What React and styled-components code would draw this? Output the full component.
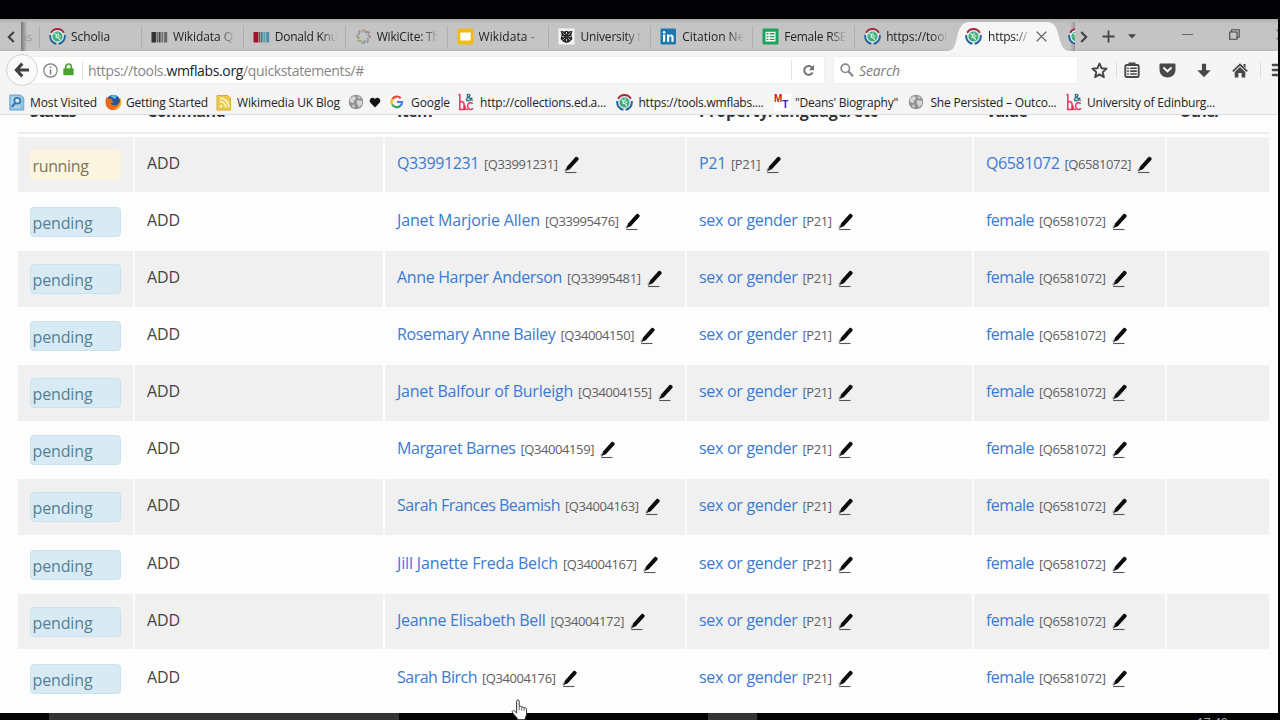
import React, { useLayoutEffect, useRef, useState } from 'react';
import styled, { createGlobalStyle, css } from 'styled-components';

const GlobalStyle = createGlobalStyle`
  * { box-sizing: border-box; }
  body {
    margin: 0;
    background: #000;
    overflow: hidden;
    font-family: "Open Sans", "Noto Sans", sans-serif;
  }
  svg { display: block; flex: none; }
`;

// spreads the letters of a label over a fixed width
const Fit = ({ w, children }) => {
  const ref = useRef(null);
  const [spacing, setSpacing] = useState(0);

  useLayoutEffect(() => {
    const count = ref.current.textContent.length;
    setSpacing((w - ref.current.getBoundingClientRect().width) / count);
  }, [w]);

  return (
    <FitBox $w={w}>
      <span ref={ref} style={{ letterSpacing: `${spacing}px` }}>{children}</span>
    </FitBox>
  );
};

/* ---------- icons ---------- */

const ToolsIcon = () => (
  <svg width="17" height="17" viewBox="0 0 17 17" fill="none">
    <circle cx="8.5" cy="8.5" r="7" fill="#dfe7ea" />
    <circle cx="8.5" cy="8.5" r="5" fill="#3fae7c" />
    <path d="M5.4 5.6l2 1.2-.3 2.2 2.6 1 1 2" stroke="#e6f5ec" strokeWidth="1.2" />
    <path d="M9 4.6v3.4h2.6" stroke="#e3f4ea" strokeWidth="1" />
    <path d="M2.1 4.8A7.3 7.3 0 0 1 14.900 4.800" stroke="#a5283c" strokeWidth="1.900" />
    <path d="M1.300 7A7.300 7.300 0 0 0 7.400 15.700" stroke="#22659c" strokeWidth="1.900" />
    <path d="M15.700 7A7.300 7.300 0 0 1 9.600 15.700" stroke="#22659c" strokeWidth="1.900" />
  </svg>
);

const BarsIcon = ({ colored }) => (
  <svg width="17" height="16" viewBox="0 0 17 16">
    <rect x="0.5" y="3" width="4.5" height="10.5" fill={colored ? '#a5102f' : '#333'} />
    <rect x="5.6" y="3" width="1.2" height="10.5" fill={colored ? '#a5102f' : '#555'} />
    <rect x="7.6" y="3" width="2" height="10.5" fill={colored ? '#3e7f90' : '#444'} />
    <rect x="10.4" y="3" width="2" height="10.5" fill={colored ? '#5d9dac' : '#777'} />
    <rect x="13.2" y="3" width="3" height="10.5" fill={colored ? '#4b90a2' : '#666'} />
  </svg>
);

const WheelIcon = () => (
  <svg width="17" height="17" viewBox="0 0 17 17" fill="none" strokeWidth="1.6">
    {[0, 45, 90, 135, 180, 225, 270, 315].map((a, i) => (
      <path
        key={a}
        d="M6.4 4.6 Q7.6 1.9 10.4 1.7"
        stroke={['#a99a7c', '#8c8c8c', '#a98484', '#999', '#7f9a9a', '#b0a070', '#8f9d74', '#999'][i]}
        transform={`rotate(${a} 8.5 8.5)`}
      />
    ))}
  </svg>
);

const SlidesIcon = () => (
  <svg width="17" height="17" viewBox="0 0 17 17">
    <rect x="0.5" y="0.5" width="16" height="16" rx="1.5" fill="#f0bb12" />
    <rect x="3.3" y="4.5" width="10.4" height="8" fill="#fff" />
  </svg>
);

const CrestIcon = () => (
  <svg width="17" height="17" viewBox="0 0 17 17">
    <rect x="0.5" y="0.5" width="16" height="16" fill="#f4f4f4" />
    <path d="M2.6 2.8l3.4.8 2.5-.8 2.5.8 3.4-.8-1 4.2 1 4-2.400 2.800-3.500 1.100L5 13.800l-2.400-2.800 1-4z" fill="#252525" />
    <path d="M4.500 4.500l8 8M12.500 4.500l-8 8" stroke="#b8b8b8" strokeWidth="0.900" />
    <path d="M4 8.600h2M11 8.600h2M8.500 4v2M8.500 11v2.400" stroke="#eee" strokeWidth="0.800" />
    <circle cx="8.500" cy="8.500" r="2" fill="#333" />
  </svg>
);

const LinkedInIcon = () => (
  <svg width="17" height="17" viewBox="0 0 17 17">
    <rect x="0.500" y="0.500" width="15.500" height="16" rx="1" fill="#1879b3" />
    <rect x="3" y="6.500" width="2.200" height="7.200" fill="#fff" />
    <circle cx="4.100" cy="4.200" r="1.300" fill="#fff" />
    <path d="M7 13.700V6.500h2.100v1C10.300 5.700 13.600 6 13.600 9.200v4.500h-2.200V9.700c0-2-2.200-1.800-2.200 0v4z" fill="#fff" />
  </svg>
);

const SheetsIcon = () => (
  <svg width="17" height="17" viewBox="0 0 17 17">
    <rect x="0.500" y="0.500" width="16" height="16" rx="1" fill="#1da45c" />
    <rect x="3.500" y="3.800" width="10" height="9.700" fill="#fff" />
    <path d="M4.500 5.800h2M7.700 5.800h4.800M4.500 8.600h2M7.700 8.600h4.800M4.500 11.400h2M7.700 11.400h4.800" stroke="#1da45c" strokeWidth="1.400" />
  </svg>
);

const VisitedIcon = () => (
  <svg width="16" height="17" viewBox="0 0 16 17">
    <path d="M.8 1h11l3 3v12H.8z" fill="#8fc1e0" stroke="#6ea5cb" />
    <path d="M2 2.500h9v12H2z" fill="#a9d2ec" />
    <circle cx="8.300" cy="6.800" r="2.900" fill="#d5ebf8" stroke="#3776aa" strokeWidth="1.700" />
    <path d="M6.200 9l-3.400 4" stroke="#3776aa" strokeWidth="2.200" />
  </svg>
);

const FirefoxIcon = () => (
  <svg width="17" height="17" viewBox="0 0 17 17">
    <circle cx="8.300" cy="8" r="7.200" fill="#24559b" />
    <path d="M5 2a7 7 0 0 1 7-.2c-1 1.200-1 2.700-2 3.500z" fill="#5cb4e4" />
    <path d="M1.600 2.800C.3 5.300 0 9.500 1.500 12.500c2.500 4.500 10 5 13.200.5 1.800-2.800 2-6.500.3-9.200.3 3-.8 6.400-4 7.400-3 .6-5-.6-5.400-2.400 1.400.5 2.800 0 3.300-1L6.700 6.600l.6-1.700C5 5 3.200 4.500 1.600 2.800z" fill="#e66a1e" />
    <path d="M12.600 12.800c2.400-1.900 3-5 2.400-9 2 3.200 1.800 7.400-.7 9.800-2 1.800-4.600 2.300-6.600 1.700 2 0 3.500-.9 4.900-2.500z" fill="#f6b52c" />
  </svg>
);

const FeedIcon = () => (
  <svg width="16" height="17" viewBox="0 0 16 17" fill="none">
    <path d="M1 1.500h11l2.500 2.800V16H1z" fill="#ebc94f" stroke="#d3ad38" />
    <path d="M4 7.500a5.800 5.800 0 0 1 5.800 5.800M4 4.300a9 9 0 0 1 9 9" stroke="#fff6d2" strokeWidth="1.600" />
    <circle cx="5" cy="12.200" r="1.300" fill="#fff6d2" />
  </svg>
);

const GlobeIcon = () => (
  <svg width="16" height="16" viewBox="0 0 16 16">
    <circle cx="8" cy="8" r="7.300" fill="#929292" />
    <path d="M2 5l3-2.800 3 .8-.5 2.500L5.500 7 6 8.700 4 9 1.800 7.500zM8.500 7.500L11 6.200l3.500 1-.6 3.300-2.700 2.900-1.700-2.700z" fill="#d6d6d6" />
    <path d="M10 1.700l3 2-1.800 1.200-1.500-1zM4.500 10.500l2.500.8-.6 2.600-2.300-1z" fill="#c7c7c7" />
  </svg>
);

const HeartIcon = () => (
  <svg width="12" height="11" viewBox="0 0 12 11">
    <path d="M6 10.500L1.200 5.600C-.9 2.600 3.300-1.300 6 2c2.700-3.300 6.900.6 4.800 3.600z" fill="#111" />
  </svg>
);

const GoogleIcon = () => (
  <svg width="14" height="14" viewBox="0 0 14 14" fill="none" strokeWidth="2.200">
    <path d="M2.300 4.200A5.200 5.200 0 0 1 10.700 3.200" stroke="#e5453a" />
    <path d="M2.300 4.200a5.200 5.200 0 0 0 0 5.300" stroke="#f3b911" />
    <path d="M2.300 9.500a5.200 5.200 0 0 0 8 1.400" stroke="#35a455" />
    <path d="M10.300 10.900C11.500 9.900 12.100 8.500 12.100 7H7" stroke="#4480ea" />
  </svg>
);

const LibraryIcon = () => (
  <svg width="16" height="18" viewBox="0 0 16 18" fill="none">
    <path d="M1.800 1v15.300M.4 1.500h1.400M1.800 9.400c1.500-1.500 4.200-.9 4.200 1.600v5M6 11c0 6 3.500 5.800 3.500 5.300M.8 16.500H7" stroke="#e03a63" strokeWidth="1.500" />
    <path d="M14.600 10.800c-1.200-1.900-5-1.400-5 2.200s3.700 4.400 5.300 2.200" stroke="#e03a63" strokeWidth="1.500" />
    <path d="M14.800 7.600L9.300 3.200C8.500 1.300 12 .6 12 2.500c0 1.700-3.600 2-3.600 4 0 2.200 4.600 1.800 5.700-2" stroke="#2f7187" strokeWidth="1.400" />
  </svg>
);

const BackIcon = () => (
  <svg width="16" height="16" viewBox="0 0 16 16" fill="none" stroke="#424242" strokeWidth="3.100">
    <path d="M8.300 1.600L2.400 8l5.900 6.400M3 8h12" />
  </svg>
);

const InfoIcon = () => (
  <svg width="15" height="15" viewBox="0 0 15 15" fill="none" stroke="#7c7c7c">
    <circle cx="7.500" cy="7.500" r="6.700" strokeWidth="1.200" />
    <path d="M7.500 6.500v5M7.500 3.500v1.600" strokeWidth="1.500" />
  </svg>
);

const LockIcon = () => (
  <svg width="11" height="13" viewBox="0 0 11 13">
    <path d="M2.700 6V3.800a2.800 2.800 0 0 1 5.600 0V6" fill="none" stroke="#4aa52e" strokeWidth="1.700" />
    <rect x="0.300" y="5.300" width="10.400" height="7" rx="0.800" fill="#4aa52e" />
  </svg>
);

const ReloadIcon = () => (
  <svg width="13" height="13" viewBox="0 0 13 13">
    <path d="M10.300 3.700A4.500 4.500 0 1 0 10.600 8.600" fill="none" stroke="#737373" strokeWidth="2" />
    <path d="M12 .8v5.400H6.700z" fill="#737373" />
  </svg>
);

const SearchIcon = () => (
  <svg width="14" height="14" viewBox="0 0 14 14" fill="none" stroke="#8a8a8a">
    <circle cx="5.300" cy="5.300" r="4.200" strokeWidth="1.700" />
    <path d="M8.300 8.300l4.700 4.900" strokeWidth="2.300" />
  </svg>
);

const StarIcon = () => (
  <svg width="17" height="17" viewBox="0 0 17 17" fill="none" stroke="#444" strokeWidth="1.900" strokeLinejoin="round">
    <path d="M8.500 1.500l2 4.700 5 .5-3.800 3.400 1.200 5-4.400-2.700-4.400 2.700 1.200-5L1.500 6.700l5-.5z" />
  </svg>
);

const ClipboardIcon = () => (
  <svg width="16" height="16" viewBox="0 0 16 16" fill="none" stroke="#484848" strokeWidth="1.900">
    <rect x="1.300" y="3" width="13.400" height="12" rx="1.300" />
    <path d="M5.300 3V1.300h5.400V3M3.200 6.300h1.600M6.200 6.300h6.600M3.200 9.100h1.600M6.200 9.100h6.600M3.200 12h1.600M6.200 12h6.600" strokeWidth="1.600" />
  </svg>
);

const PocketIcon = () => (
  <svg width="17" height="15" viewBox="0 0 17 15">
    <path d="M1.800.5h13.400c.8 0 1.300.5 1.300 1.300v4.700c0 10.600-16 10.600-16 0V1.800C.500 1 1 .5 1.800.5z" fill="#484848" />
    <path d="M5 5l3.500 3.300L12 5" fill="none" stroke="#f5f5f5" strokeWidth="2" strokeLinecap="round" />
  </svg>
);

const DownloadIcon = () => (
  <svg width="14" height="15" viewBox="0 0 14 15">
    <path d="M4.900.8h4.200v6.500h4.600L7 14.200.300 7.300h4.600z" fill="#484848" />
  </svg>
);

const HomeIcon = () => (
  <svg width="16" height="15" viewBox="0 0 16 15">
    <path d="M.8 8.300L8 1.500l7.200 6.800" fill="none" stroke="#484848" strokeWidth="1.800" />
    <path d="M11.500 1h2v4l-2-2zM2.700 9L8 4.100 13.300 9v5.600H9.600V10H6.400v4.600H2.700z" fill="#484848" />
  </svg>
);

const MenuIcon = () => (
  <svg width="16" height="14" viewBox="0 0 16 14" stroke="#484848" strokeWidth="2.600" strokeLinecap="round">
    <path d="M2 2h12M2 7h12M2 12h12" />
  </svg>
);

const Chevron = ({ left }) => (
  <svg width="8" height="12" viewBox="0 0 8 12" fill="none" stroke="#404040" strokeWidth="2.100">
    <path d={left ? 'M6.800 1L1.800 6l5 5' : 'M1.200 1l5 5-5 5'} />
  </svg>
);

const PlusIcon = () => (
  <svg width="13" height="13" viewBox="0 0 13 13" stroke="#444" strokeWidth="1.800">
    <path d="M6.500 .5v12M.5 6.500h12" />
  </svg>
);

const CaretIcon = () => (
  <svg width="8" height="5" viewBox="0 0 8 5"><path d="M0 .3h8L4 4.600z" fill="#444" /></svg>
);

const CloseIcon = () => (
  <svg width="11" height="11" viewBox="0 0 11 11" stroke="#555" strokeWidth="1.200">
    <path d="M.7 .7l9.600 9.600M10.300 .7L.7 10.300" />
  </svg>
);

const MinimizeIcon = () => (
  <svg width="11" height="3" viewBox="0 0 11 3"><path d="M0 1.500h11" stroke="#666" /></svg>
);

const RestoreIcon = () => (
  <svg width="11" height="11" viewBox="0 0 11 11" fill="none" stroke="#444" strokeWidth="1.100">
    <path d="M.7 3h7.300v7.300H.7zM2.700 3V.8h7.500v7.400H8" />
  </svg>
);

const PencilIcon = () => (
  <svg width="16" height="18" viewBox="0 0 16 18">
    <path d="M1.200 16.500h11.300" stroke="#555" strokeWidth="1.100" />
    <path d="M11.300 1.200c1-.7 1.700-.4 2.600.4s1.100 1.400.4 2.400l-8.500 9.300-3.100 1.200-1.200 1-.3-.3.900-1.400.9-3.200z" fill="#0a0a0a" />
    <path d="M1.200 15.300v-1.800l1.600-2" fill="none" stroke="#777" strokeWidth="0.900" />
  </svg>
);

const HandCursor = () => (
  <svg width="19" height="22" viewBox="0 0 19 22">
    <path
      d="M6.600 2.200c0-1.700 2.600-1.700 2.600 0v5.200c1-.6 2.100-.1 2.400.7.900-.5 2-.1 2.300.8 1.200-.6 2.600 0 2.600 1.600v4.200c0 2.700-1.300 3.400-1.500 6H7.800c-.4-2.200-3.200-4-5.300-7.200-.9-1.500.9-2.500 2-1.500l2.100 2z"
      fill="#fff"
      stroke="#333"
      strokeWidth="1"
    />
    <path d="M9.200 7.400v4M11.700 8.200v3.300M14.100 9v2.800" stroke="#555" strokeWidth="0.900" />
  </svg>
);

/* ---------- data ---------- */

const tabs = [
  { label: 'Scholia', w: 39, icon: <ToolsIcon /> },
  { label: 'Wikidata Q', w: 60, icon: <BarsIcon /> },
  { label: 'Donald Knu', w: 63, icon: <BarsIcon colored /> },
  { label: 'WikiCite: Th', w: 63, icon: <WheelIcon /> },
  { label: 'Wikidata -', w: 56, icon: <SlidesIcon /> },
  { label: 'University t', w: 61, icon: <CrestIcon /> },
  { label: 'Citation Ne', w: 62, icon: <LinkedInIcon /> },
  { label: 'Female RSE', w: 62, icon: <SheetsIcon /> },
  { label: 'https://tool', w: 61, icon: <ToolsIcon /> },
];

const bookmarks = [
  { label: 'Most Visited', w: 67, size: 96, icon: <VisitedIcon /> },
  { label: 'Getting Started', w: 82, size: 111, icon: <FirefoxIcon /> },
  { label: 'Wikimedia UK Blog', w: 103, size: 132, icon: <FeedIcon /> },
  { heart: true, size: 42, icon: <GlobeIcon /> },
  { label: 'Google', w: 39, size: 67.500, icon: <GoogleIcon /> },
  { label: 'http://collections.ed.a...', w: 126, size: 158.500, wide: true, icon: <LibraryIcon /> },
  { label: 'https://tools.wmflabs....', w: 125, size: 158, wide: true, icon: <ToolsIcon /> },
  { label: '"Deans\' Biography"', w: 103, size: 134, mt: true },
  { label: 'She Persisted – Outco...', w: 126, size: 158, wide: true, icon: <GlobeIcon /> },
  { label: 'University of Edinburg...', w: 128, size: 160, icon: <LibraryIcon /> },
];

const headers = [
  ['Status', 46],
  ['Command', 78],
  ['Item', 35],
  ['Property/language/etc', 179],
  ['Value', 41],
  ['Other', 41],
];

const rows = [
  ['Q33991231', 82, 'Q33991231'],
  ['Janet Marjorie Allen', 143, 'Q33995476'],
  ['Anne Harper Anderson', 165, 'Q33995481'],
  ['Rosemary Anne Bailey', 158.5, 'Q34004150'],
  ['Janet Balfour of Burleigh', 176, 'Q34004155'],
  ['Margaret Barnes', 118.5, 'Q34004159'],
  ['Sarah Frances Beamish', 163, 'Q34004163'],
  ['Jill Janette Freda Belch', 161, 'Q34004167'],
  ['Jeanne Elisabeth Bell', 148.5, 'Q34004172'],
  ['Sarah Birch', 80, 'Q34004176'],
];

const Entity = ({ name, w, id, idWidth }) => (
  <EntityLine>
    <Link><Fit w={w}>{name}</Fit></Link>
    <EntityId><Fit w={idWidth}>{`[${id}]`}</Fit></EntityId>
    <PencilIcon />
  </EntityLine>
);

const App = () => (
  <Screen>
    <GlobalStyle />
    <Window>
      <TabBar>
        <ScrollLeft><Chevron left /></ScrollLeft>
        <TabRemnant>is</TabRemnant>
        {tabs.map((tab) => (
          <Tab key={tab.label}>
            {tab.icon}
            <TabLabel><Fit w={tab.w}>{tab.label}</Fit></TabLabel>
          </Tab>
        ))}
        <ActiveTab>
          <TabShape width="126" height="30" viewBox="0 0 126 30">
            <path d="M0 30C8 30 9 25 11 16S16 1 24 1H101c8 0 10 7 12 15s4 14 12 14z" fill="#f6f6f6" />
          </TabShape>
          <ActiveContent>
            <ToolsIcon />
            <ActiveLabel><Fit w={39}>https://</Fit></ActiveLabel>
            <CloseIcon />
          </ActiveContent>
        </ActiveTab>
        <CutTab><ToolsIcon /></CutTab>
        <TabTools>
          <Chevron />
          <PlusIcon />
          <CaretIcon />
        </TabTools>
        <WindowButtons>
          <MinimizeIcon />
          <RestoreIcon />
          <CloseIcon />
        </WindowButtons>
      </TabBar>

      <NavBar>
        <BackButton><BackIcon /></BackButton>
        <UrlField>
          <InfoIcon />
          <LockIcon />
          <Url>
            <Fit w={276}>https://tools.<b>wmflabs.org</b>/quickstatements/#</Fit>
          </Url>
          <Reload><ReloadIcon /></Reload>
        </UrlField>
        <SearchField>
          <SearchIcon />
          <Fit w={41}>Search</Fit>
        </SearchField>
        <NavIcons>
          <NavCell $w={33}><StarIcon /></NavCell>
          <NavCell $w={31} $line><ClipboardIcon /></NavCell>
          <NavCell $w={41}><PocketIcon /></NavCell>
          <NavCell $w={32}><DownloadIcon /></NavCell>
          <NavCell $w={40}><HomeIcon /></NavCell>
          <NavCell $w={37} $line><MenuIcon /></NavCell>
        </NavIcons>
      </NavBar>

      <BookmarkBar>
        {bookmarks.map((mark, i) => (
          <Bookmark key={i} $size={mark.size}>
            <MarkIcon $wide={mark.wide}>
              {mark.mt ? <Initials><i>M</i><b>T</b></Initials> : mark.icon}
            </MarkIcon>
            {mark.heart ? <HeartIcon /> : <Fit w={mark.w}>{mark.label}</Fit>}
          </Bookmark>
        ))}
      </BookmarkBar>

      <Content>
        <HeaderRow>
          {headers.map(([label, w]) => (
            <HeaderCell key={label}><Fit w={w}>{label}</Fit></HeaderCell>
          ))}
        </HeaderRow>
        <Rows>
          {rows.map(([name, w, id], i) => (
            <Row key={id}>
              <Cell $odd={i % 2 === 0} $status>
                <Status $running={i === 0}>
                  <Fit w={i === 0 ? 56 : 60}>{i === 0 ? 'running' : 'pending'}</Fit>
                </Status>
              </Cell>
              <Cell $odd={i % 2 === 0}><Fit w={33}>ADD</Fit></Cell>
              <Cell $odd={i % 2 === 0}><Entity name={name} w={w} id={id} idWidth={73.5} /></Cell>
              <Cell $odd={i % 2 === 0}>
                <Entity name={i === 0 ? 'P21' : 'sex or gender'} w={i === 0 ? 27 : 98.5} id="P21" idWidth={29} />
              </Cell>
              <Cell $odd={i % 2 === 0}>
                <Entity name={i === 0 ? 'Q6581072' : 'female'} w={i === 0 ? 73.5 : 48} id="Q6581072" idWidth={66.5} />
              </Cell>
              <Cell $odd={i % 2 === 0} />
            </Row>
          ))}
        </Rows>
      </Content>
    </Window>

    <Taskbar>
      <TaskSlot $w={49} />
      <TaskSlot $w={350} $lit />
      <TaskSlot $w={309} />
      <TaskSlot $w={49} $lit />
      <Clock>17:49</Clock>
    </Taskbar>
    <Pointer><HandCursor /></Pointer>
  </Screen>
);

export default App;

const FitBox = styled.span`
  display: inline-block;
  flex: none;
  width: ${({ $w }) => $w}px;
  white-space: nowrap;
`;

const Screen = styled.div`
  position: relative;
  width: 1280px;
  height: 720px;
  overflow: hidden;
  background: #020205;
  padding-top: 19px;
`;

const Window = styled.div`
  display: flex;
  flex-direction: column;
  width: 1278px;
  height: 694px;
  background: #fdfdfd;
  overflow: hidden;
`;

const TabBar = styled.div`
  display: flex;
  flex: none;
  height: 32px;
  padding-top: 3px;
  overflow: hidden;
  background: linear-gradient(#b0b0b0, #c3c3c3 5px, #c5c5c5 90%, #b8b8b8);
  font-size: 12px;
  color: #222;
`;

const ScrollLeft = styled.div`
  display: flex;
  flex: none;
  align-items: center;
  justify-content: center;
  width: 21px;
  height: 29px;
`;

const TabRemnant = styled.div`
  flex: none;
  width: 18px;
  height: 29px;
  padding-left: 3px;
  line-height: 29px;
  font-size: 11px;
  color: #969696;
  background: linear-gradient(90deg, #777, #c3c3c3 6px);
`;

const Tab = styled.div`
  display: flex;
  flex: none;
  align-items: center;
  gap: 5px;
  width: 101.9px;
  height: 29px;
  padding-left: 10px;
  overflow: hidden;
  background: linear-gradient(#adadad, #adadad) 0 4px / 1px 22px no-repeat;
`;

const TabLabel = styled.span`
  width: 62px;
  overflow: hidden;
  mask-image: linear-gradient(90deg, #000 74%, transparent);
`;

const ActiveTab = styled.div`
  position: relative;
  flex: none;
  width: 112px;
  height: 29px;
`;

const TabShape = styled.svg`
  position: absolute;
  left: -10px;
  top: -1px;
`;

const ActiveContent = styled.div`
  position: relative;
  display: flex;
  align-items: center;
  height: 29px;
  padding-left: 9px;
  gap: 6px;
  svg:last-child { margin-left: 3px; }
`;

const ActiveLabel = styled.span`
  mask-image: linear-gradient(90deg, #000 70%, rgba(0, 0, 0, 0.3));
`;

const CutTab = styled.div`
  display: flex;
  flex: none;
  align-items: center;
  width: 7px;
  height: 29px;
  overflow: hidden;
  background: linear-gradient(90deg, transparent 2px, #999);
`;

const TabTools = styled.div`
  display: flex;
  flex: none;
  align-items: center;
  gap: 14px;
  height: 29px;
  margin-left: 5px;
  svg:nth-child(2) { margin: 0 -1px 0 0; }
`;

const WindowButtons = styled.div`
  display: flex;
  flex: none;
  align-items: center;
  gap: 36px;
  height: 25px;
  margin-left: 46px;
`;

const NavBar = styled.div`
  display: flex;
  align-items: center;
  flex: none;
  height: 38px;
  background: #f5f5f5;
`;

const BackButton = styled.div`
  position: relative;
  z-index: 1;
  display: flex;
  flex: none;
  align-items: center;
  justify-content: center;
  width: 32px;
  height: 32px;
  margin-left: 6px;
  border: 1px solid #d2d2d2;
  border-radius: 50%;
  background: #fafafa;
`;

const field = css`
  display: flex;
  flex: none;
  align-items: center;
  height: 28px;
  background: #fff;
  border: 1px solid #f0f0f0;
`;

const UrlField = styled.div`
  ${field}
  width: 797px;
  margin-left: -10px;
  padding-left: 14px;
  gap: 5px;
  svg + svg { margin-top: -1px; }
`;

const Url = styled.div`
  flex: 1;
  margin-left: 3px;
  padding-left: 5px;
  border-left: 1px solid #e4e4e4;
  font-size: 14px;
  color: #858585;
  b { font-weight: 400; color: #222; }
`;

const Reload = styled.div`
  display: flex;
  align-items: center;
  justify-content: center;
  width: 33px;
  height: 20px;
  border-left: 1px solid #e4e4e4;
`;

const SearchField = styled.div`
  ${field}
  width: 245px;
  margin-left: 8px;
  padding-left: 6px;
  gap: 5px;
  font-size: 14px;
  font-style: italic;
  color: #7c7c7c;
`;

const NavIcons = styled.div`
  display: flex;
  flex: none;
  margin-left: 5px;
`;

const NavCell = styled.div`
  display: flex;
  flex: none;
  align-items: center;
  justify-content: center;
  width: ${({ $w }) => $w}px;
  height: 28px;
  ${({ $line }) => $line && css`
    background: linear-gradient(#ddd, #ddd) 0 6px / 1px 16px no-repeat;
  `}
`;

const BookmarkBar = styled.div`
  position: relative;
  z-index: 1;
  display: flex;
  flex: none;
  height: 26px;
  padding-left: 9px;
  background: #f5f5f5;
  border-bottom: 1px solid #ddd;
  font-size: 12px;
  color: #222;
`;

const Bookmark = styled.div`
  display: flex;
  flex: none;
  align-items: center;
  width: ${({ $size }) => $size}px;
  height: 26px;
`;

const MarkIcon = styled.span`
  display: flex;
  flex: none;
  width: ${({ $wide }) => ($wide ? 22.5 : 21)}px;
`;

const Initials = styled.span`
  display: flex;
  width: 17px;
  height: 17px;
  background: #fff;
  font: 700 10px/10px "Liberation Sans", sans-serif;
  i { font-style: normal; color: #c4152b; }
  b { color: #2a22b5; padding-top: 6px; }
`;

const Content = styled.div`
  flex: 1;
  padding: 0 9px 0 18px;
  font-size: 16px;
  color: #444;
`;

const grid = css`
  display: grid;
  grid-template-columns: 115px 248px 300px 285px 191px 102px;
  column-gap: 2px;
`;

const HeaderRow = styled.div`
  ${grid}
  height: 23px;
  margin-top: -4px;
  border-bottom: 2px solid #ededed;
  margin-bottom: 3px;
`;

const HeaderCell = styled.div`
  height: 22px;
  margin-top: -11px;
  padding-left: 12px;
  line-height: 22px;
  font-weight: 700;
  color: #333;
`;

const Rows = styled.div`
  display: grid;
  grid-auto-rows: 55.4px;
  row-gap: 1.7px;
`;

const Row = styled.div`
  ${grid}
`;

const Cell = styled.div`
  padding: ${({ $status }) => ($status ? '13px 12px 0 11.5px' : '14px 12px 0')};
  line-height: 24px;
  background: ${({ $odd }) => ($odd ? '#f0f0f0' : '#fdfdfd')};
`;

const Status = styled.div`
  height: 30px;
  padding: 3px 2px;
  border: 1px solid ${({ $running }) => ($running ? '#faf3dc' : '#c9e2ec')};
  border-radius: 4px;
  background: ${({ $running }) => ($running ? '#fcf5df' : '#d8ebf4')};
  color: ${({ $running }) => ($running ? '#807460' : '#557f94')};
`;

const EntityLine = styled.div`
  display: flex;
  align-items: baseline;
  svg {
    align-self: flex-start;
    margin: 5px 0 0 6px;
  }
`;

const Link = styled.span`
  color: #3b7ad2;
`;

const EntityId = styled.span`
  margin-left: 5px;
  font-size: 13px;
  color: #606060;
`;

const Taskbar = styled.div`
  display: flex;
  height: 7px;
  overflow: hidden;
`;

const TaskSlot = styled.div`
  width: ${({ $w }) => $w}px;
  background: ${({ $lit }) => ($lit ? '#333' : '#020205')};
`;

const Clock = styled.span`
  margin-left: 440px;
  padding-top: 2px;
  font-size: 12px;
  line-height: 16px;
  color: #aaa;
`;

const Pointer = styled.div`
  position: absolute;
  left: 510px;
  top: 699px;
`;
